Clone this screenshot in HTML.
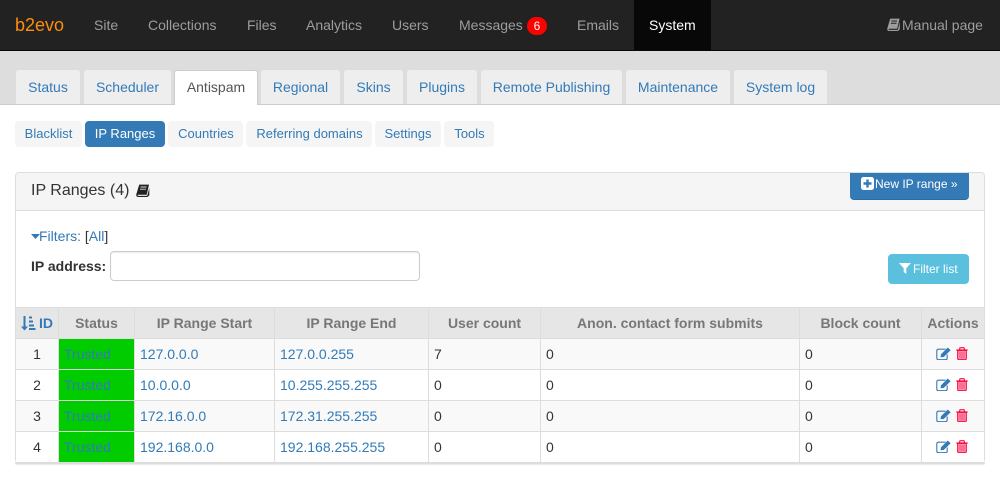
<!DOCTYPE html>
<html><head><meta charset="utf-8"><style>
html,body{margin:0;padding:0;background:#fff}
body{position:relative;width:1000px;height:482px;overflow:hidden;font-family:"Liberation Sans",sans-serif;font-size:14px;color:#333;line-height:20px}
.a{position:absolute;white-space:nowrap}
.n{position:absolute;top:15px;color:#9d9d9d}
.t{position:absolute;top:70px;height:34px;background:#eee;border-radius:3px 3px 0 0;color:#337ab7;text-align:center;line-height:35px}
.p{position:absolute;top:121px;height:26px;background:#f5f5f5;border-radius:4px;color:#337ab7;font-size:13px;text-align:center;line-height:26px}
.h{position:absolute;top:308px;height:30px;background:#e6e6e6;color:#777;font-weight:bold;text-align:center;line-height:30px}
.c{position:absolute;height:30px;line-height:31px;box-sizing:border-box;padding-left:5px}
.l{color:#337ab7}
.g{background:#0c0;color:#337ab7}
svg{position:absolute;display:block}
</style></head><body>
<div class="a" style="left:0;top:0;width:1000px;height:50px;background:#222;border-bottom:1px solid #080808"></div>
<div class="a" style="left:634px;top:0;width:77px;height:50px;background:#080808"></div>
<div class="a" style="left:15px;top:15px;font-size:18px;line-height:20px;color:#ff8c0f">b2evo</div>
<div class="n" style="left:94px">Site</div>
<div class="n" style="left:148px">Collections</div>
<div class="n" style="left:247px">Files</div>
<div class="n" style="left:306px">Analytics</div>
<div class="n" style="left:392px">Users</div>
<div class="n" style="left:459px">Messages</div>
<div class="a" style="left:527px;top:17px;width:20px;height:18px;border-radius:9px;background:#f00;color:#fff;font-size:12px;line-height:18px;text-align:center">6</div>
<div class="n" style="left:577px">Emails</div>
<div class="n" style="left:649px;color:#fff">System</div>
<svg style="left:887px;top:18px" width="13" height="14" viewBox="0 0 13 14"><path d="M3.200 .6H12.600L10.200 10.800H2.400C1.600 10.800 1.400 11.500 2 11.900H10.800L12.800 4V11.400L11 13H2C.6 13 .1 11.800 .3 10.400Z" fill="#9d9d9d"/><path d="M4.400 3H10M3.900 5.200H9.500" stroke="#222" stroke-width="1"/></svg>
<div class="n" style="left:902px">Manual page</div>

<div class="a" style="left:0;top:51px;width:1000px;height:53px;background:#ddd"></div>
<div class="a" style="left:0;top:104px;width:1000px;height:1px;background:#ccc"></div>
<div class="t" style="left:16px;width:64px">Status</div>
<div class="t" style="left:84px;width:87px">Scheduler</div>
<div class="t" style="left:174px;width:84px;height:35px;box-sizing:border-box;background:#fff;color:#555;border:1px solid #ccc;border-bottom:0;line-height:33px">Antispam</div>
<div class="t" style="left:261px;width:79px">Regional</div>
<div class="t" style="left:344px;width:59px">Skins</div>
<div class="t" style="left:407px;width:70px">Plugins</div>
<div class="t" style="left:481px;width:141px">Remote Publishing</div>
<div class="t" style="left:626px;width:104px">Maintenance</div>
<div class="t" style="left:734px;width:93px">System log</div>

<div class="p" style="left:15px;width:67px">Blacklist</div>
<div class="p" style="left:85px;width:80px;background:#337ab7;color:#fff">IP Ranges</div>
<div class="p" style="left:168px;width:75px;text-indent:1px">Countries</div>
<div class="p" style="left:246px;width:126px;text-indent:1px">Referring domains</div>
<div class="p" style="left:375px;width:66px">Settings</div>
<div class="p" style="left:444px;width:50px;text-indent:1px">Tools</div>

<div class="a" style="left:15px;top:172px;width:970px;height:291px;box-sizing:border-box;border:1px solid #ddd;border-bottom:0;border-radius:4px"></div>
<div class="a" style="left:16px;top:173px;width:968px;height:37px;background:#f5f5f5;border-bottom:1px solid #ddd;border-radius:3px 3px 0 0"></div>
<div class="a" style="left:31px;top:181px;font-size:16px;line-height:20px">IP Ranges (4)</div>
<svg style="left:136px;top:184px" width="14" height="14" viewBox="0 0 14 14"><path d="M3.200 .6H13L10.700 10.800H2.500C1.600 10.800 1.400 11.500 2 11.900H11.200L13.300 4V11.400L11.400 13H2C.6 13 .1 11.800 .3 10.400Z" fill="#222"/><path d="M4.500 3H10.500M4 5.200H10" stroke="#ddd" stroke-width=".9"/></svg>
<div class="a" style="left:850px;top:173px;width:119px;height:27px;background:#337ab7;border-bottom:1px solid #2e6da4;border-radius:0 0 4px 4px;box-sizing:border-box"></div>
<svg style="left:861px;top:177px" width="13" height="13" viewBox="0 0 13 13"><rect width="13" height="13" rx="2.500" fill="#fff"/><path d="M6.500 2.500V10.500M2.500 6.500H10.500" stroke="#337ab7" stroke-width="2.400"/></svg>
<div class="a" style="left:875px;top:174px;font-size:12px;color:#fff;line-height:20px">New IP range »</div>

<svg style="left:31px;top:234px" width="9" height="5" viewBox="0 0 9 5"><path d="M0 0H9L4.500 5Z" fill="#337ab7"/></svg>
<div class="a" style="left:39px;top:226px"><span class="l">Filters:</span> [<span class="l">All</span>]</div>
<div class="a" style="left:31px;top:256px;font-weight:bold">IP address:</div>
<div class="a" style="left:110px;top:251px;width:310px;height:30px;box-sizing:border-box;border:1px solid #ccc;border-radius:4px;background:#fff;box-shadow:inset 0 1px 1px rgba(0,0,0,.075)"></div>
<div class="a" style="left:888px;top:254px;width:81px;height:30px;background:#5bc0de;border-radius:4px;border:1px solid #5bc0de;box-sizing:border-box"></div>
<svg style="left:899px;top:263px" width="12" height="11" viewBox="0 0 12 11"><path d="M0 0H12L7.300 5.200V11L4.700 9V5.200Z" fill="#fff"/></svg>
<div class="a" style="left:913px;top:259px;font-size:12px;color:#fff;line-height:20px">Filter list</div>

<div class="a" style="left:16px;top:307px;width:968px;height:156px;background:#ddd"></div>
<div class="a" style="left:15px;top:462px;width:970px;height:2px;border-radius:0 0 4px 4px;background:#ddd;box-shadow:0 1px 1px rgba(0,0,0,.1)"></div>

<div class="h" style="left:16px;width:42px"></div>
<svg style="left:21px;top:316px" width="15" height="15" viewBox="0 0 15 15"><path d="M3.500 0V12" stroke="#337ab7" stroke-width="2"/><path d="M0 10.500H7L3.500 14.500Z" fill="#337ab7"/><path d="M8 1.500H11M8 5.500H12M8 9.500H13M8 13H14.500" stroke="#337ab7" stroke-width="2"/></svg>
<div class="a" style="left:39px;top:313px;font-weight:bold;color:#337ab7">ID</div>
<div class="h" style="left:59px;width:75px">Status</div>
<div class="h" style="left:135px;width:139px">IP Range Start</div>
<div class="h" style="left:275px;width:153px">IP Range End</div>
<div class="h" style="left:429px;width:111px">User count</div>
<div class="h" style="left:541px;width:258px">Anon. contact form submits</div>
<div class="h" style="left:800px;width:121px">Block count</div>
<div class="h" style="left:922px;width:62px">Actions</div>

<div class="c" style="left:16px;top:339px;width:42px;background:#f9f9f9;text-align:center;padding:0">1</div>
<div class="c g" style="left:59px;top:339px;width:75px">Trusted</div>
<div class="c l" style="left:135px;top:339px;width:139px;background:#f9f9f9">127.0.0.0</div>
<div class="c l" style="left:275px;top:339px;width:153px;background:#f9f9f9">127.0.0.255</div>
<div class="c" style="left:429px;top:339px;width:111px;background:#f9f9f9">7</div>
<div class="c" style="left:541px;top:339px;width:258px;background:#f9f9f9">0</div>
<div class="c" style="left:800px;top:339px;width:121px;background:#f9f9f9">0</div>
<div class="c" style="left:922px;top:339px;width:62px;background:#f9f9f9"></div>

<div class="c" style="left:16px;top:370px;width:42px;background:#fff;text-align:center;padding:0">2</div>
<div class="c g" style="left:59px;top:370px;width:75px">Trusted</div>
<div class="c l" style="left:135px;top:370px;width:139px;background:#fff">10.0.0.0</div>
<div class="c l" style="left:275px;top:370px;width:153px;background:#fff">10.255.255.255</div>
<div class="c" style="left:429px;top:370px;width:111px;background:#fff">0</div>
<div class="c" style="left:541px;top:370px;width:258px;background:#fff">0</div>
<div class="c" style="left:800px;top:370px;width:121px;background:#fff">0</div>
<div class="c" style="left:922px;top:370px;width:62px;background:#fff"></div>

<div class="c" style="left:16px;top:401px;width:42px;background:#f9f9f9;text-align:center;padding:0">3</div>
<div class="c g" style="left:59px;top:401px;width:75px">Trusted</div>
<div class="c l" style="left:135px;top:401px;width:139px;background:#f9f9f9">172.16.0.0</div>
<div class="c l" style="left:275px;top:401px;width:153px;background:#f9f9f9">172.31.255.255</div>
<div class="c" style="left:429px;top:401px;width:111px;background:#f9f9f9">0</div>
<div class="c" style="left:541px;top:401px;width:258px;background:#f9f9f9">0</div>
<div class="c" style="left:800px;top:401px;width:121px;background:#f9f9f9">0</div>
<div class="c" style="left:922px;top:401px;width:62px;background:#f9f9f9"></div>

<div class="c" style="left:16px;top:432px;width:42px;background:#fff;text-align:center;padding:0">4</div>
<div class="c g" style="left:59px;top:432px;width:75px">Trusted</div>
<div class="c l" style="left:135px;top:432px;width:139px;background:#fff">192.168.0.0</div>
<div class="c l" style="left:275px;top:432px;width:153px;background:#fff">192.168.255.255</div>
<div class="c" style="left:429px;top:432px;width:111px;background:#fff">0</div>
<div class="c" style="left:541px;top:432px;width:258px;background:#fff">0</div>
<div class="c" style="left:800px;top:432px;width:121px;background:#fff">0</div>
<div class="c" style="left:922px;top:432px;width:62px;background:#fff"></div>

<svg width="0" height="0" style="position:absolute"><defs>
<g id="e"><path d="M9.500 2.200H2.500C1.400 2.200 .8 2.900 .8 4V11C.8 12.100 1.400 12.700 2.500 12.700H9.500C10.600 12.700 11.200 12.100 11.200 11V7.500" fill="none" stroke="#337ab7" stroke-width="1.100"/><path d="M4.500 10.300L5 7.300L11.800 .5L14.600 3.300L7.700 10Z" fill="#337ab7"/></g>
<g id="d"><path d="M.3 3H11.700M3.700 3V1.500C3.700 1 4 .7 4.500 .7H7.500C8 .7 8.300 1 8.300 1.500V3" fill="none" stroke="#f5103f" stroke-width="1.200"/><path d="M1.600 3.500H10.400V11.500C10.400 12.200 10 12.600 9.300 12.600H2.700C2 12.600 1.600 12.200 1.600 11.500Z" fill="#ff8cab" stroke="#f5103f" stroke-width="1"/><path d="M4 5V11M6 5V11M8 5V11" stroke="#f0407a" stroke-width=".8"/></g>
</defs></svg>
<svg style="left:936px;top:347px" width="15" height="13" viewBox="0 0 15 13"><use href="#e"/></svg>
<svg style="left:956px;top:347px" width="12" height="13" viewBox="0 0 12 13"><use href="#d"/></svg>
<svg style="left:936px;top:378px" width="15" height="13" viewBox="0 0 15 13"><use href="#e"/></svg>
<svg style="left:956px;top:378px" width="12" height="13" viewBox="0 0 12 13"><use href="#d"/></svg>
<svg style="left:936px;top:409px" width="15" height="13" viewBox="0 0 15 13"><use href="#e"/></svg>
<svg style="left:956px;top:409px" width="12" height="13" viewBox="0 0 12 13"><use href="#d"/></svg>
<svg style="left:936px;top:440px" width="15" height="13" viewBox="0 0 15 13"><use href="#e"/></svg>
<svg style="left:956px;top:440px" width="12" height="13" viewBox="0 0 12 13"><use href="#d"/></svg>
</body></html>
